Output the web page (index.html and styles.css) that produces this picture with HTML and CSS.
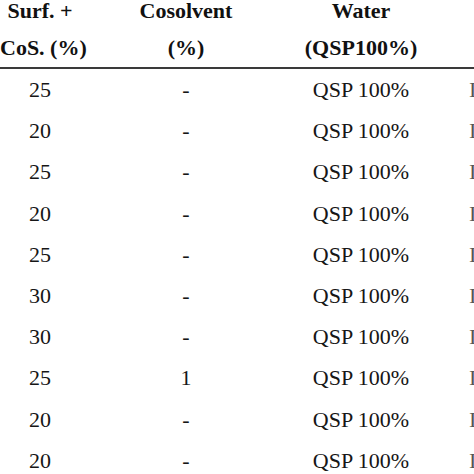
FILE: index.html
```html
<!DOCTYPE html>
<html>
<head>
<meta charset="utf-8">
<link rel="stylesheet" href="styles.css">
</head>
<body>
<div class="table">
  <div class="head">
    <div class="hrow first">
      <div class="c c1">Surf. +</div>
      <div class="c c2">Cosolvent</div>
      <div class="c c3">Water</div>
      <div class="c c4"></div>
    </div>
    <div class="hrow second">
      <div class="c c1">CoS. (%)</div>
      <div class="c c2">(%)</div>
      <div class="c c3">(QSP100%)</div>
      <div class="c c4"></div>
    </div>
  </div>
  <div class="row"><div class="c c1">25</div><div class="c c2">-</div><div class="c c3">QSP 100%</div><div class="c c4">I</div></div>
  <div class="row"><div class="c c1">20</div><div class="c c2">-</div><div class="c c3">QSP 100%</div><div class="c c4">I</div></div>
  <div class="row"><div class="c c1">25</div><div class="c c2">-</div><div class="c c3">QSP 100%</div><div class="c c4">I</div></div>
  <div class="row"><div class="c c1">20</div><div class="c c2">-</div><div class="c c3">QSP 100%</div><div class="c c4">I</div></div>
  <div class="row"><div class="c c1">25</div><div class="c c2">-</div><div class="c c3">QSP 100%</div><div class="c c4">I</div></div>
  <div class="row"><div class="c c1">30</div><div class="c c2">-</div><div class="c c3">QSP 100%</div><div class="c c4">I</div></div>
  <div class="row"><div class="c c1">30</div><div class="c c2">-</div><div class="c c3">QSP 100%</div><div class="c c4">I</div></div>
  <div class="row"><div class="c c1">25</div><div class="c c2">1</div><div class="c c3">QSP 100%</div><div class="c c4">I</div></div>
  <div class="row"><div class="c c1">20</div><div class="c c2">-</div><div class="c c3">QSP 100%</div><div class="c c4">I</div></div>
  <div class="row"><div class="c c1">20</div><div class="c c2">-</div><div class="c c3">QSP 100%</div><div class="c c4">I</div></div>
</div>
</body>
</html>
```
FILE: styles.css
```css
html, body {
  margin: 0;
  padding: 0;
  background: #ffffff;
  overflow: hidden;
}
body {
  width: 474px;
  height: 474px;
  font-family: "Liberation Serif", "Times New Roman", serif;
  font-size: 22px;
  color: #161616;
}
.table {
  width: 474px;
}
.head {
  font-weight: bold;
  color: #111111;
  border-bottom: 2px solid #3a3a3a;
}
.hrow, .row {
  display: grid;
  grid-template-columns: 80px 212px 138px 44px;
  white-space: nowrap;
}
.hrow.first {
  line-height: 22px;
}
.hrow.second {
  line-height: 38px;
  padding-top: 7px;
}
.row {
  line-height: 41.2px;
}
.c {
  text-align: center;
}
.c4 {
  text-align: left;
  padding-left: 39px;
  color: #555555;
}
```
